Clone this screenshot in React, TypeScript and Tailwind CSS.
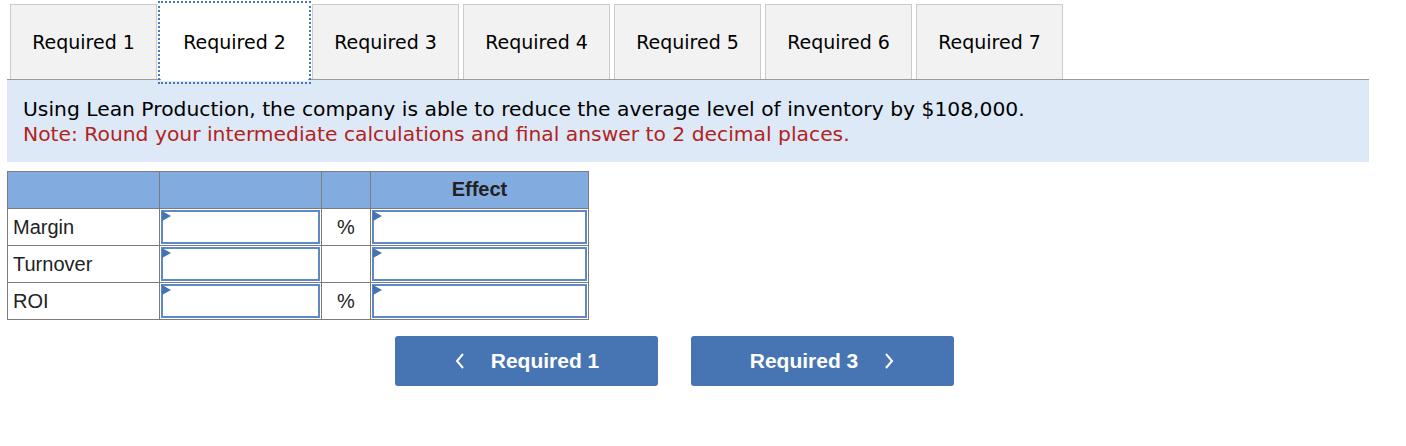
import React from 'react';

const tabs = ['Required 1', 'Required 2', 'Required 3', 'Required 4', 'Required 5', 'Required 6', 'Required 7'];

const rows = [
  { label: 'Margin', pct: true },
  { label: 'Turnover', pct: false },
  { label: 'ROI', pct: true },
];

// little blue flag in the corner of every answer box
const AnswerBox = () => (
  <div className="relative h-[34px] w-full border-2 border-[#5d89c6] bg-white">
    <span className="absolute -left-[1px] -top-[1px] h-0 w-0 border-y-[5px] border-l-[9px] border-y-transparent border-l-[#4673b5]" />
  </div>
);

const Chevron = ({ dir }: { dir: 'left' | 'right' }) => (
  <svg width="12" height="18" viewBox="0 0 12 18" fill="none" stroke="white" strokeWidth="2">
    {dir === 'left' ? <polyline points="9,2 3,9 9,16" /> : <polyline points="3,2 9,9 3,16" />}
  </svg>
);

export default function App() {
  return (
    <div className="w-[1406px] h-[446px] bg-white text-black">
      {/* tab strip */}
      <div className="flex gap-[4px] pl-[10px] pt-[4px] font-['DejaVu_Sans',sans-serif] text-[19px]">
        {tabs.map((t, i) =>
          i === 1 ? (
            <div
              key={t}
              className="relative z-10 -mb-[2px] flex h-[77px] w-[147px] items-center justify-center bg-white pb-[1px] outline-2 outline-dotted outline-offset-[1px] outline-[#4a78b8]"
            >
              {t}
            </div>
          ) : (
            <div
              key={t}
              className="flex h-[75px] w-[147px] items-center justify-center border border-b-0 border-[#cbcbcb] bg-[#f2f2f2]"
            >
              {t}
            </div>
          )
        )}
      </div>

      {/* instructions */}
      <div className="ml-[7px] w-[1362px] border-t border-[#9a9a9a] bg-[#dde9f7] pl-[16px] pt-[17px] pb-[15px] font-['DejaVu_Sans',sans-serif] text-[20.3px] leading-[25px]">
        <p>Using Lean Production, the company is able to reduce the average level of inventory by $108,000.</p>
        <p className="text-[#b1241d]">Note: Round your intermediate calculations and final answer to 2 decimal places.</p>
      </div>

      {/* answer table */}
      <table className="ml-[7px] mt-[9px] border-collapse font-['Liberation_Sans',Arial,sans-serif] text-[20px] text-[#222]">
        <thead>
          <tr className="h-[37px] bg-[#82abdf]">
            <th className="w-[152px] border border-[#7c7c7c]" />
            <th className="w-[162px] border border-[#7c7c7c]" />
            <th className="w-[49px] border border-[#7c7c7c]" />
            <th className="w-[218px] border border-[#7c7c7c] pb-[2px] text-center font-bold">Effect</th>
          </tr>
        </thead>
        <tbody>
          {rows.map((r) => (
            <tr key={r.label} className="h-[37px]">
              <td className="border border-[#7c7c7c] pl-[5px] leading-none">{r.label}</td>
              <td className="border border-[#7c7c7c] p-[1px]">
                <AnswerBox />
              </td>
              <td className="border border-[#7c7c7c] text-center leading-none">{r.pct ? '%' : ''}</td>
              <td className="border border-[#7c7c7c] p-[1px]">
                <AnswerBox />
              </td>
            </tr>
          ))}
        </tbody>
      </table>

      {/* navigation */}
      <div className="mt-[16px] flex gap-[33px] pl-[395px] font-['Liberation_Sans',Arial,sans-serif] text-[21px] font-bold text-white">
        <button className="flex h-[50px] w-[263px] items-center justify-center gap-[25px] rounded-[3px] bg-[#4775b4]">
          <Chevron dir="left" />
          <span>Required 1</span>
        </button>
        <button className="flex h-[50px] w-[263px] items-center justify-center gap-[25px] rounded-[3px] bg-[#4775b4]">
          <span>Required 3</span>
          <Chevron dir="right" />
        </button>
      </div>
    </div>
  );
}
